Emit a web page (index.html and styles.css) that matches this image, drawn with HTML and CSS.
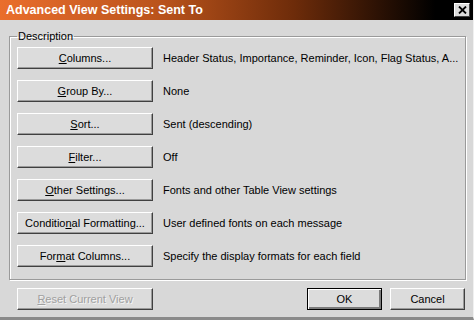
FILE: index.html
```html
<!DOCTYPE html>
<html lang="en">
<head>
    <meta charset="UTF-8">
    <title>Advanced View Settings: Sent To</title>
    <link rel="stylesheet" href="styles.css">
</head>
<body>
    <div class="Window">
        <div class="TitleBar">
            <span class="Title">Advanced View Settings: Sent To</span>
            <span class="Close">
                <svg width="9" height="8" viewBox="0 0 9 8"><path d="M1 0.5 L8 7.5 M8 0.5 L1 7.5" stroke="#000" stroke-width="1.8" fill="none"/></svg>
            </span>
        </div>
        <div class="Body">
            <fieldset class="Group">
                <legend>Description</legend>
                <div class="Row">
                    <a class="button"><u>C</u>olumns...</a>
                    <span class="Info">Header Status, Importance, Reminder, Icon, Flag Status, A...</span>
                </div>
                <div class="Row">
                    <a class="button"><u>G</u>roup By...</a>
                    <span class="Info">None</span>
                </div>
                <div class="Row">
                    <a class="button"><u>S</u>ort...</a>
                    <span class="Info">Sent (descending)</span>
                </div>
                <div class="Row">
                    <a class="button"><u>F</u>ilter...</a>
                    <span class="Info">Off</span>
                </div>
                <div class="Row">
                    <a class="button"><u>O</u>ther Settings...</a>
                    <span class="Info">Fonts and other Table View settings</span>
                </div>
                <div class="Row">
                    <a class="button">Conditio<u>n</u>al Formatting...</a>
                    <span class="Info">User defined fonts on each message</span>
                </div>
                <div class="Row">
                    <a class="button">For<u>m</u>at Columns...</a>
                    <span class="Info">Specify the display formats for each field</span>
                </div>
            </fieldset>
            <div class="Footer">
                <a class="button disabled"><u>R</u>eset Current View</a>
                <div class="Actions">
                    <a class="button default small">OK</a>
                    <a class="button small">Cancel</a>
                </div>
            </div>
        </div>
    </div>
</body>
</html>
```

FILE: styles.css
```css
* {
    box-sizing: border-box;
}
body {
    margin: 0;
    background-color: #d8d8d8;
    font-family: "Liberation Sans", Arial, sans-serif;
    font-size: 11px;
    color: #000;
}
.Window {
    width: 474px;
    height: 320px;
    background-color: #d8d8d8;
    border-right: 1px solid #f0f0f0;
    border-bottom: 3px solid #8a8a8a;
    overflow: hidden;
}
.TitleBar {
    height: 20px;
    display: flex;
    align-items: center;
    justify-content: space-between;
    padding: 0 3px 0 6px;
    background: linear-gradient(to right, #ea6e2c 0%, #b8521b 35%, #6e2c0a 62%, #000 92%);
}
.Title {
    color: #fff;
    font-weight: bold;
    font-size: 12.5px;
}
.Close {
    width: 16px;
    height: 14px;
    display: flex;
    align-items: center;
    justify-content: center;
    background-color: #dcdcdc;
    border-top: 1px solid #fff;
    border-left: 1px solid #fff;
    border-right: 1px solid #404040;
    border-bottom: 1px solid #404040;
}
.Body {
    padding: 10px 8px 0 9px;
}
.Group {
    margin: 0;
    padding: 5px 7px 7px 7px;
    width: 457px;
    height: 250px;
    border: 1px solid #9a9a9a;
    box-shadow: 1px 1px 0 #fff, inset 1px 1px 0 #fff;
    display: flex;
    flex-direction: column;
    gap: 11px;
}
.Group legend {
    padding: 0 1px;
    margin-left: 0;
}
.Row {
    display: flex;
    align-items: center;
    gap: 10px;
}
.Info {
    white-space: nowrap;
}
.button {
    width: 136px;
    height: 22px;
    flex-shrink: 0;
    display: flex;
    align-items: center;
    justify-content: center;
    background-color: #dcdcdc;
    border-top: 1px solid #fff;
    border-left: 1px solid #fff;
    border-right: 1px solid #404040;
    border-bottom: 1px solid #404040;
    box-shadow: inset -1px -1px 0 #9a9a9a;
    white-space: nowrap;
    user-select: none;
}
.button.small {
    width: 75px;
}
.button.default {
    border: 1px solid #000;
    box-shadow: inset 1px 1px 0 #fff, inset -2px -2px 0 #7a7a7a;
}
.button.disabled {
    color: #a0a0a0;
    text-shadow: 1px 1px 0 #f4f4f4;
}
.Footer {
    display: flex;
    justify-content: space-between;
    align-items: center;
    padding: 8px 0 0 8px;
}
.Actions {
    display: flex;
    gap: 8px;
}
```
